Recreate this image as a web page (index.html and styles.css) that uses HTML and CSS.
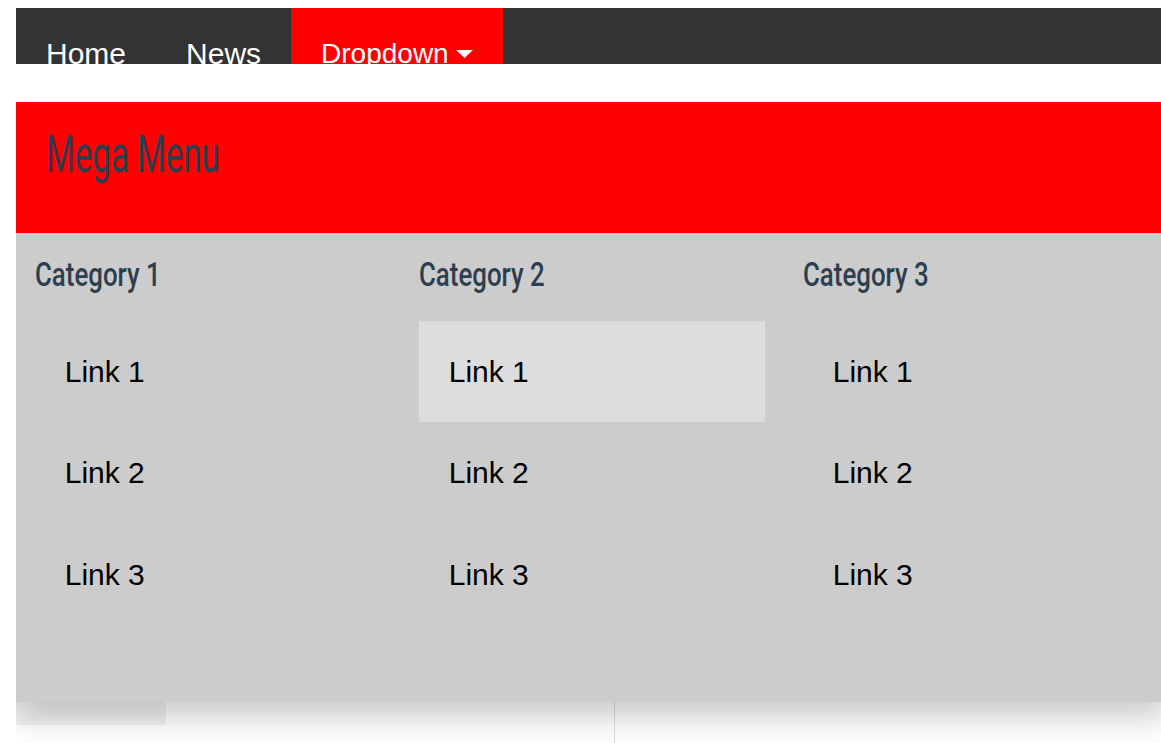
FILE: index.html
```html
<!DOCTYPE html>
<html lang="en">
<head>
<meta charset="utf-8">
<title>Mega Menu</title>
<link rel="stylesheet" href="styles.css">
</head>
<body>
<nav class="navbar">
  <a class="nav-link" href="#">Home</a>
  <a class="nav-link" href="#">News</a>
  <div class="dropdown">
    <button class="dropbtn">Dropdown <svg class="caret" viewBox="0 0 17 8" width="17" height="8" aria-hidden="true"><polygon points="0,0 17,0 8.5,8" fill="#fff"/></svg></button>
    <div class="dropdown-content">
      <div class="mega-header">
        <h2 class="mega-title">Mega Menu</h2>
      </div>
      <div class="row">
        <div class="column">
          <h3 class="cat-title">Category 1</h3>
          <a class="col-link" href="#">Link 1</a>
          <a class="col-link" href="#">Link 2</a>
          <a class="col-link" href="#">Link 3</a>
        </div>
        <div class="column">
          <h3 class="cat-title">Category 2</h3>
          <a class="col-link is-hover" href="#">Link 1</a>
          <a class="col-link" href="#">Link 2</a>
          <a class="col-link" href="#">Link 3</a>
        </div>
        <div class="column">
          <h3 class="cat-title">Category 3</h3>
          <a class="col-link" href="#">Link 1</a>
          <a class="col-link" href="#">Link 2</a>
          <a class="col-link" href="#">Link 3</a>
        </div>
      </div>
    </div>
  </div>
</nav>
<main class="content">
  <div class="left-col">
    <div class="sidebar"></div>
  </div>
  <div class="right-col"></div>
</main>
</body>
</html>
```

FILE: styles.css
```css
html, body {
  overflow: hidden;
}
body {
  margin: 0;
  padding: 8px 0 0 16px;
  background: #fff;
  font-family: "Liberation Sans", Arial, sans-serif;
}
.navbar {
  display: flex;
  align-items: flex-start;
  height: 56px;
  overflow: hidden;
  background: #333;
}
.nav-link {
  padding: 28.5px 30px;
  font-size: 30px;
  line-height: normal;
  color: #fff;
  text-decoration: none;
}
.dropbtn {
  margin: 0;
  padding: 29.5px 30px;
  border: none;
  outline: none;
  background: #f00;
  color: #fff;
  font-family: "Liberation Sans", Arial, sans-serif;
  font-size: 28px;
  line-height: normal;
}
.caret {
  display: inline-block;
  vertical-align: 5px;
}
.dropdown-content {
  position: absolute;
  top: 102px;
  left: 16px;
  width: 1152px;
  z-index: 2;
  box-shadow: 0 15px 30px rgba(0, 0, 0, 0.21);
  clip-path: inset(0 -60px -80px 0);
}
.mega-header {
  box-sizing: border-box;
  height: 131px;
  padding: 21.5px 30px 0;
  background: #f00;
}
.mega-title {
  display: inline-block;
  margin: 0;
  font-family: Roboto, sans-serif;
  font-size: 51.6px;
  font-weight: 400;
  line-height: normal;
  color: #2c3e50;
  transform: scaleX(0.64);
  transform-origin: left center;
  white-space: nowrap;
}
.row {
  display: flex;
}
.column {
  box-sizing: border-box;
  width: 384px;
  height: 468.75px;
  padding: 18.75px;
  background: #ccc;
}
.cat-title {
  margin: 2px 0 27px;
  font-family: Roboto, sans-serif;
  font-size: 34px;
  font-weight: 500;
  line-height: normal;
  color: #2c3e50;
  transform: scaleX(0.76);
  transform-origin: left center;
  white-space: nowrap;
}
.col-link {
  display: block;
  padding: 33.75px 30px;
  font-size: 30px;
  line-height: normal;
  color: #000;
  text-decoration: none;
}
.col-link.is-hover {
  background: #ddd;
}
.content {
  display: flex;
  margin-top: 38px;
}
.left-col {
  width: 598px;
}
.sidebar {
  width: 150px;
  height: 623px;
  background: #f1f1f1;
}
.right-col {
  height: 660px;
  border-left: 1px solid #ddd;
}
```
